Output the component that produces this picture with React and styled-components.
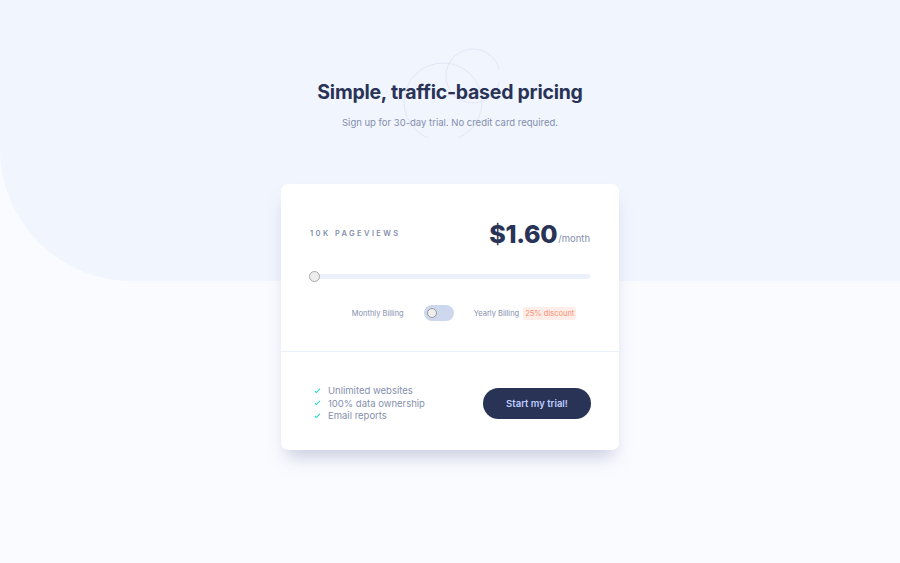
import React, { useState } from 'react'
import styled, { createGlobalStyle } from 'styled-components'

const GlobalStyle = createGlobalStyle`
  * { box-sizing: border-box; }
  body {
    margin: 0;
    background: #FAFBFF;
    font-family: Inter, "Noto Sans", sans-serif;
  }
`

const Page = styled.div`
  position: relative;
  min-height: 563px;
  display: flex;
  flex-direction: column;
  align-items: center;
  padding-top: 80px;
  overflow: hidden;

  &::before {
    content: '';
    position: absolute;
    top: 0;
    left: 0;
    right: 0;
    height: 281px;
    background: #F1F5FE;
    border-bottom-left-radius: 132px;
    z-index: 0;
  }
`

const Header = styled.header`
  position: relative;
  z-index: 1;
  display: flex;
  flex-direction: column;
  align-items: center;
`

const Circles = styled.svg`
  position: absolute;
  top: -42px;
  left: 50%;
  margin-left: -51px;
  z-index: -1;
`

const Title = styled.h1`
  margin: 0;
  font-size: 19.5px;
  font-weight: 700;
  color: #293356;
  letter-spacing: -0.25px;
`

const Subtitle = styled.p`
  margin: 13px 0 0;
  font-size: 9.5px;
  color: #848EAD;
`

const Card = styled.section`
  position: relative;
  z-index: 1;
  margin-top: 56px;
  width: 338px;
  background: #fff;
  border-radius: 7px;
  box-shadow: 0 12px 18px -6px rgba(100, 112, 160, 0.35);
`

const Top = styled.div`
  padding: 35px 29px 30px;
`

const PriceRow = styled.div`
  display: flex;
  justify-content: space-between;
  align-items: center;
`

const Views = styled.span`
  margin-top: -2px;
  font-size: 7.5px;
  font-weight: 600;
  letter-spacing: 2.4px;
  color: #858FAD;
`

const Price = styled.div`
  display: flex;
  align-items: center;
  color: #293356;
`

const Amount = styled.span`
  font-size: 25px;
  font-weight: 800;
  letter-spacing: -0.3px;
`

const Per = styled.span`
  margin-left: 1px;
  margin-top: 8px;
  font-size: 9.5px;
  color: #858FAD;
`

const Track = styled.div`
  position: relative;
  margin-top: 25px;
  height: 5px;
  border-radius: 3px;
  background: #ECF0FB;
`

const Thumb = styled.div`
  position: absolute;
  top: 50%;
  left: ${p => p.$pos}%;
  width: 11px;
  height: 11px;
  margin-top: -5.5px;
  margin-left: -1px;
  border-radius: 50%;
  background: #eeeeee;
  border: 1px solid #a9a9a9;
`

const Billing = styled.div`
  display: flex;
  align-items: center;
  justify-content: center;
  margin-top: 26px;
  padding-left: 28px;
  font-size: 7.5px;
  color: #858FAD;
`

const Toggle = styled.button`
  width: 30px;
  height: 16px;
  margin: 0 20px 0 20px;
  padding: 3px;
  border: 0;
  border-radius: 8px;
  background: #CDD7EE;
  display: flex;
  justify-content: ${p => (p.$on ? 'flex-end' : 'flex-start')};
  cursor: pointer;
`

const Knob = styled.span`
  width: 10px;
  height: 10px;
  border-radius: 50%;
  background: #eeeeee;
  border: 1px solid #9a9a9a;
`

const Discount = styled.span`
  margin-left: 4px;
  padding: 2px 2px;
  border-radius: 3px;
  background: #FEEDE8;
  color: #FF8D68;
`

const Bottom = styled.div`
  display: flex;
  align-items: center;
  justify-content: space-between;
  padding: 33px 28px 28px 33px;
  border-top: 1px solid #ECF0FB;
`

const Features = styled.ul`
  list-style: none;
  margin: 0;
  padding: 0;
  display: flex;
  flex-direction: column;
  gap: 1px;
`

const Feature = styled.li`
  display: flex;
  align-items: center;
  gap: 7px;
  font-size: 9.5px;
  line-height: 11.5px;
  color: #858FAD;
`

const Button = styled.button`
  width: 108px;
  height: 31px;
  border: 0;
  border-radius: 16px;
  background: #293356;
  color: #BECDFF;
  font-family: inherit;
  font-size: 9.5px;
  font-weight: 600;
  cursor: pointer;
`

const Check = () => (
  <svg width="7" height="6" viewBox="0 0 9 8">
    <path fill="none" stroke="#10D8C4" strokeWidth="1.4" d="M1 4.134l1.907 1.908L7.949 1" />
  </svg>
)

export default function App() {
  const [yearly, setYearly] = useState(false)
  return (
    <Page>
      <GlobalStyle />
      <Header>
        <Circles width="100" height="100" viewBox="0 0 100 100">
          <circle cx="74" cy="38" r="27" fill="none" stroke="#DDE3F1" strokeWidth="0.8" />
          <circle cx="44" cy="64" r="39" fill="none" stroke="#DDE3F1" strokeWidth="0.8" />
        </Circles>
        <Title>Simple, traffic-based pricing</Title>
        <Subtitle>Sign up for 30-day trial. No credit card required.</Subtitle>
      </Header>
      <Card>
        <Top>
          <PriceRow>
            <Views>10K PAGEVIEWS</Views>
            <Price>
              <Amount>$1.60</Amount>
              <Per>/month</Per>
            </Price>
          </PriceRow>
          <Track>
            <Thumb $pos={0} />
          </Track>
          <Billing>
            <span>Monthly Billing</span>
            <Toggle $on={yearly} onClick={() => setYearly(!yearly)}>
              <Knob />
            </Toggle>
            <span>Yearly Billing</span>
            <Discount>25% discount</Discount>
          </Billing>
        </Top>
        <Bottom>
          <Features>
            <Feature><Check />Unlimited websites</Feature>
            <Feature><Check />100% data ownership</Feature>
            <Feature><Check />Email reports</Feature>
          </Features>
          <Button>Start my trial!</Button>
        </Bottom>
      </Card>
    </Page>
  )
}
